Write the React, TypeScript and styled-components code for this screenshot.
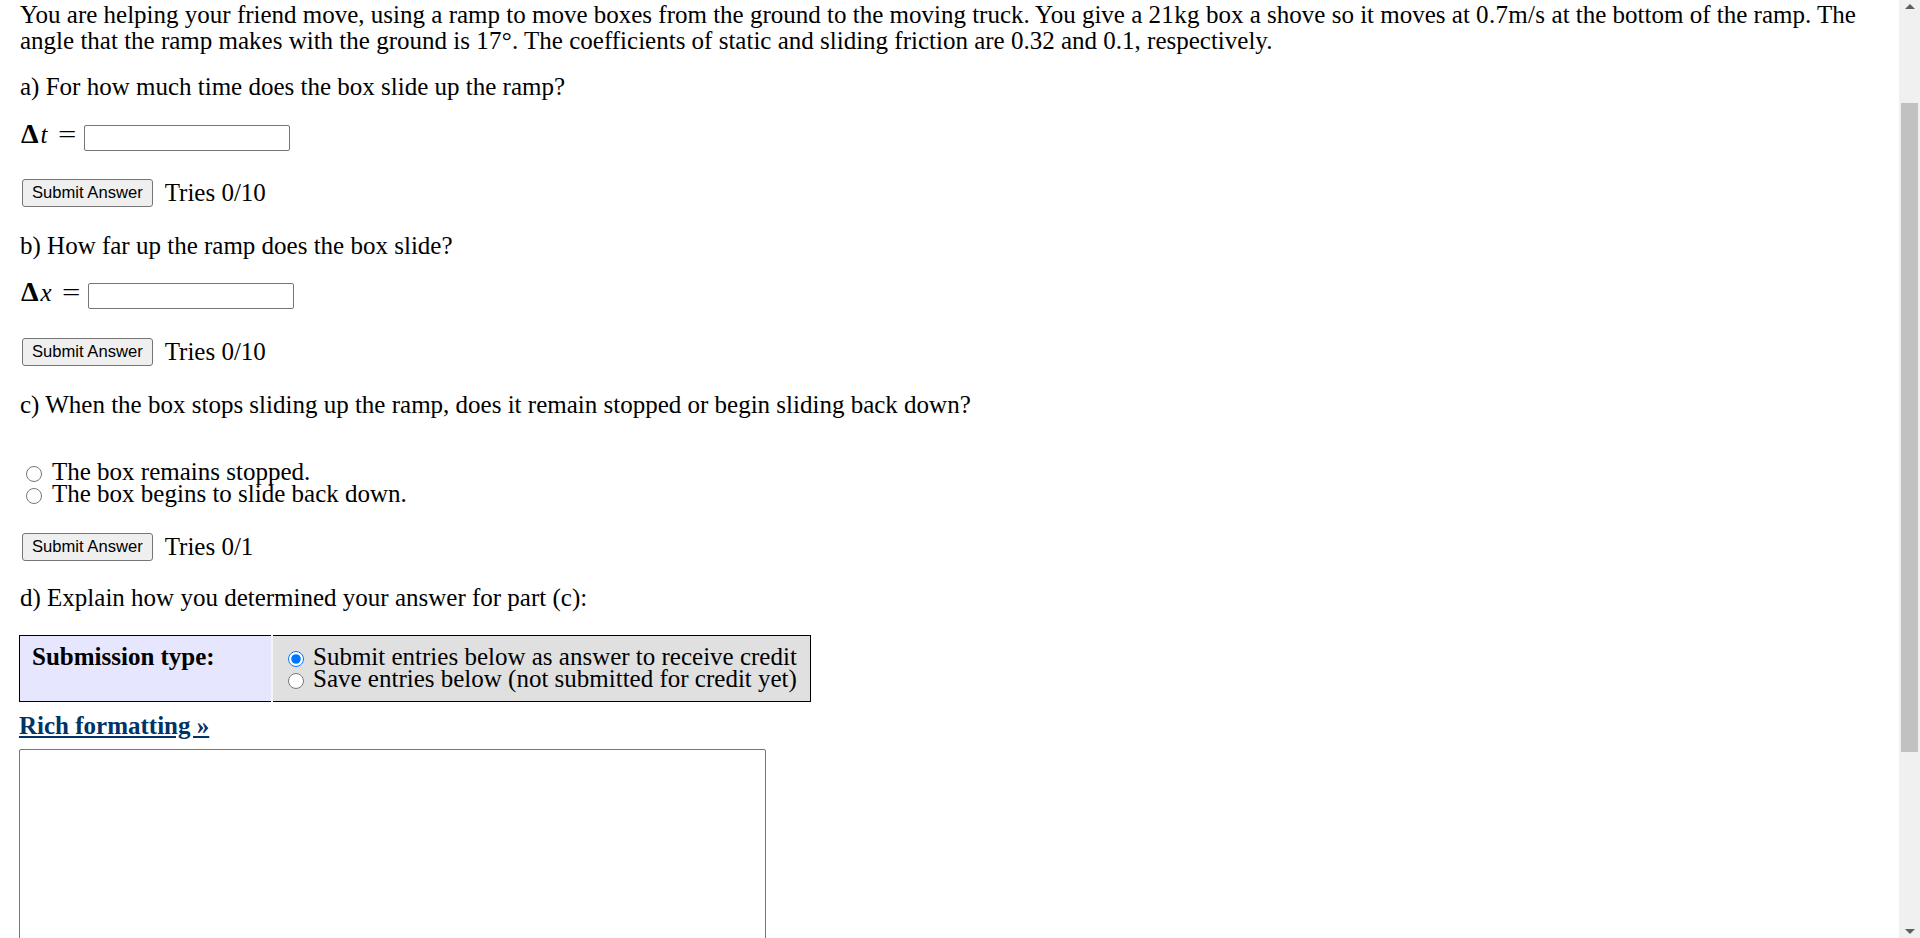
import React from "react";
import styled, { createGlobalStyle } from "styled-components";

const GlobalStyle = createGlobalStyle`
  html, body {
    margin: 0;
    padding: 0;
    background: #ffffff;
  }
  body {
    font-family: "Liberation Serif", "Times New Roman", serif;
    font-size: 25px;
    line-height: 22px;
    color: #000000;
  }
`;

const Page = styled.div`
  padding: 2px 40px 47px 19px;
`;

const Intro = styled.p`
  margin: 0;
  line-height: 26px;
  padding-left: 1px;
`;

const Question = styled.div<{ $mt: number }>`
  margin-top: ${(p) => p.$mt}px;
  padding-left: 1px;
`;

const Math = styled.span`
  font-family: "Liberation Serif", "Times New Roman", serif;
  letter-spacing: 0.3px;
`;

const MathItalic = styled.span`
  font-style: italic;
`;

const AnswerRow = styled.div<{ $mt: number }>`
  margin-top: ${(p) => p.$mt}px;
  display: flex;
  align-items: baseline;
  gap: 6px;
`;

const MathLabel = styled.span`
  padding-left: 2px;
  white-space: nowrap;
`;

const Delta = styled.span`
  font-size: 28px;
  font-weight: bold;
  margin-right: 2px;
`;

const Equals = styled.span`
  display: inline-block;
  margin: 0 4px 0 12px;
  transform: scaleX(1.3);
`;

const TextInput = styled.input`
  box-sizing: border-box;
  width: 206px;
  height: 26px;
  margin: 0;
  border: 1px solid #767676;
  border-radius: 2px;
  background: #ffffff;
  font-family: "Liberation Sans", Arial, sans-serif;
  font-size: 16px;
  padding: 1px 3px;
`;

const ButtonRow = styled.div<{ $mt: number }>`
  margin-top: ${(p) => p.$mt}px;
  display: flex;
  align-items: center;
  gap: 12px;
  padding-left: 3px;
`;

const SubmitButton = styled.button`
  box-sizing: border-box;
  height: 28px;
  margin: 0;
  padding: 0 9px;
  border: 1px solid #767676;
  border-radius: 3px;
  background: #efefef;
  color: #000000;
  font-family: "Liberation Sans", Arial, sans-serif;
  font-size: 16.6px;
  line-height: 20px;
  white-space: nowrap;
`;

const Tries = styled.span`
  white-space: nowrap;
`;

const OptionList = styled.div<{ $mt: number }>`
  margin-top: ${(p) => p.$mt}px;
  display: flex;
  flex-direction: column;
`;

const OptionLabel = styled.label`
  display: flex;
  align-items: center;
  height: 22px;
`;

const Radio = styled.input<{ $ml: number; $mr: number }>`
  width: 16px;
  height: 16px;
  margin: 4px ${(p) => p.$mr}px 0 ${(p) => p.$ml}px;
  accent-color: #0075ff;
`;

const SubmissionTable = styled.table`
  margin-top: 26px;
  width: 792px;
  border: 1px solid #000000;
  border-collapse: collapse;
  border-spacing: 0;
  table-layout: fixed;
`;

const TypeHeader = styled.th`
  width: 227px;
  background: #e6e6ff;
  text-align: left;
  vertical-align: top;
  font-weight: bold;
  padding: 10px 12px 11px 12px;
  white-space: nowrap;
`;

const TypeChoices = styled.td`
  background: #e0e0e0;
  border-left: 2px solid #f4f4f4;
  vertical-align: top;
  padding: 10px 6px 11px 12px;
  white-space: nowrap;
`;

const RichLink = styled.a`
  display: inline-block;
  margin-top: 13px;
  color: #003366;
  font-weight: bold;
  text-decoration: underline;
  cursor: pointer;
`;

const Essay = styled.textarea`
  display: block;
  box-sizing: border-box;
  margin-top: 12px;
  width: 747px;
  height: 380px;
  border: 1px solid #767676;
  border-radius: 2px;
  background: #ffffff;
  resize: both;
`;

/* Window scrollbar drawn over the right edge, as in the screenshot */
const ScrollBar = styled.div`
  position: fixed;
  top: 0;
  right: 0;
  width: 21px;
  height: 100vh;
  background: #f0f0f0;
  display: flex;
  flex-direction: column;
  align-items: center;
`;

const ArrowButton = styled.div<{ $down?: boolean }>`
  height: 21px;
  width: 21px;
  flex: none;
  display: flex;
  align-items: center;
  justify-content: center;
  &::after {
    content: "";
    width: 0;
    height: 0;
    border-left: 5px solid transparent;
    border-right: 5px solid transparent;
    ${(p) =>
      p.$down
        ? "border-top: 5px solid #606060; margin-top: 8px;"
        : "border-bottom: 5px solid #606060; margin-bottom: 8px;"}
  }
`;

const Track = styled.div`
  flex: 1;
  width: 17px;
  display: flex;
  flex-direction: column;
`;

const Thumb = styled.div`
  margin-top: 82px;
  height: 649px;
  background: #c1c1c1;
`;

export default function App() {
  return (
    <>
      <GlobalStyle />
      <Page>
        <Intro>
          You are helping your friend move, using a ramp to move boxes from the ground to the moving
          truck. You give a <Math>21kg</Math> box a shove so it moves at <Math>0.7m/s</Math> at the
          bottom of the ramp. The angle that the ramp makes with the ground is <Math>17°</Math>. The
          coefficients of static and sliding friction are 0.32 and 0.1, respectively.
        </Intro>

        <Question $mt={22}>a) For how much time does the box slide up the ramp?</Question>
        <AnswerRow $mt={25}>
          <MathLabel>
            <Delta>Δ</Delta>
            <MathItalic>t</MathItalic>
            <Equals>=</Equals>
          </MathLabel>
          <TextInput type="text" />
        </AnswerRow>
        <ButtonRow $mt={28}>
          <SubmitButton type="button">Submit Answer</SubmitButton>
          <Tries>Tries 0/10</Tries>
        </ButtonRow>

        <Question $mt={28}>b) How far up the ramp does the box slide?</Question>
        <AnswerRow $mt={24}>
          <MathLabel>
            <Delta>Δ</Delta>
            <MathItalic>x</MathItalic>
            <Equals>=</Equals>
          </MathLabel>
          <TextInput type="text" />
        </AnswerRow>
        <ButtonRow $mt={29}>
          <SubmitButton type="button">Submit Answer</SubmitButton>
          <Tries>Tries 0/10</Tries>
        </ButtonRow>

        <Question $mt={28}>
          c) When the box stops sliding up the ramp, does it remain stopped or begin sliding back down?
        </Question>
        <OptionList $mt={45}>
          <OptionLabel>
            <Radio type="radio" name="partc" $ml={7} $mr={10} />
            The box remains stopped.
          </OptionLabel>
          <OptionLabel>
            <Radio type="radio" name="partc" $ml={7} $mr={10} />
            The box begins to slide back down.
          </OptionLabel>
        </OptionList>
        <ButtonRow $mt={28}>
          <SubmitButton type="button">Submit Answer</SubmitButton>
          <Tries>Tries 0/1</Tries>
        </ButtonRow>

        <Question $mt={26}>d) Explain how you determined your answer for part (c):</Question>
        <SubmissionTable>
          <tbody>
            <tr>
              <TypeHeader>Submission type:</TypeHeader>
              <TypeChoices>
                <OptionLabel>
                  <Radio type="radio" name="subtype" defaultChecked $ml={3} $mr={9} />
                  Submit entries below as answer to receive credit
                </OptionLabel>
                <OptionLabel>
                  <Radio type="radio" name="subtype" $ml={3} $mr={9} />
                  Save entries below (not submitted for credit yet)
                </OptionLabel>
              </TypeChoices>
            </tr>
          </tbody>
        </SubmissionTable>
        <div>
          <RichLink>Rich formatting »</RichLink>
        </div>
        <Essay />
      </Page>
      <ScrollBar>
        <ArrowButton />
        <Track>
          <Thumb />
        </Track>
        <ArrowButton $down />
      </ScrollBar>
    </>
  );
}
